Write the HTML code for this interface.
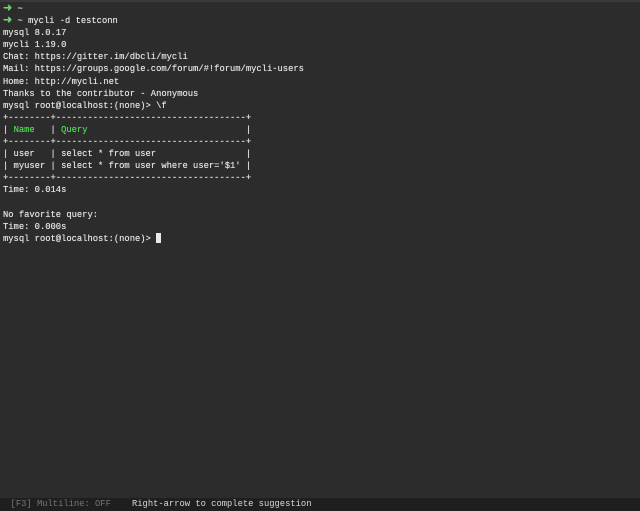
<!DOCTYPE html>
<html><head><meta charset="utf-8"><style>
html,body{margin:0;padding:0;}
body{width:640px;height:511px;background:#2c2c2c;position:relative;overflow:hidden;}
pre{position:absolute;left:3px;top:3px;margin:0;font-family:"Liberation Mono",monospace;font-size:8.8px;line-height:12.1px;color:#e2e2e2;text-shadow:0 0 0.4px #e2e2e2;}
.g{color:#5ee05e;font-weight:bold;font-size:11px;line-height:10px;font-family:"DejaVu Sans",sans-serif;}
.h{color:#4ed84e;text-shadow:0 0 0.4px #4ed84e;}
.cur{display:inline-block;width:5px;height:10px;background:#e8e8e8;vertical-align:-2px;}
.top{position:absolute;left:0;top:0;width:640px;height:2px;background:#3a3a3a;}
.bar{position:absolute;left:0;top:498px;width:640px;height:13px;background:#1f1f1f;font-family:"Liberation Mono",monospace;font-size:8.8px;line-height:13px;color:#777;white-space:pre;}
.bar b{font-weight:normal;color:#d8d8d8;}
</style></head><body>
<div class="top"></div>
<pre><span class="g">➜</span> ~
<span class="g">➜</span> ~ mycli -d testconn
mysql 8.0.17
mycli 1.19.0
Chat: https://gitter.im/dbcli/mycli
Mail: https://groups.google.com/forum/#!forum/mycli-users
Home: http://mycli.net
Thanks to the contributor - Anonymous
mysql root@localhost:(none)&gt; \f
+--------+------------------------------------+
| <span class="h">Name</span>   | <span class="h">Query</span>                              |
+--------+------------------------------------+
| user   | select * from user                 |
| myuser | select * from user where user='$1' |
+--------+------------------------------------+
Time: 0.014s

No favorite query:
Time: 0.000s
mysql root@localhost:(none)&gt; <span class="cur"></span></pre>
<div class="bar">  [F3] Multiline: OFF    <b>Right-arrow to complete suggestion</b></div>
</body></html>
